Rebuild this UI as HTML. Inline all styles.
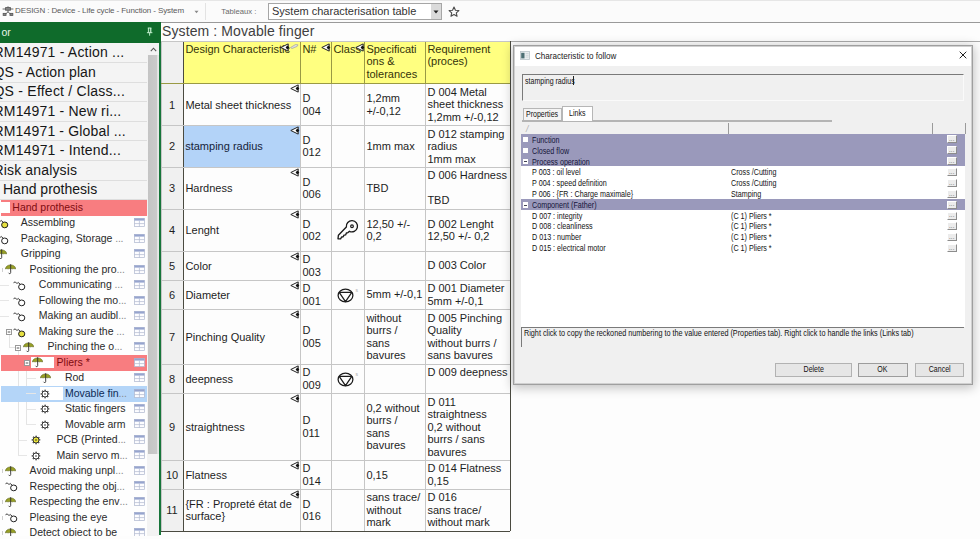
<!DOCTYPE html>
<html lang="en"><head><meta charset="utf-8"><title>System characterisation table</title>
<style>
html,body{margin:0;padding:0}
body{width:980px;height:539px;position:relative;overflow:hidden;background:#fdfdfd;font-family:"Liberation Sans","DejaVu Sans",sans-serif;color:#1c1c1c}
div,span,svg{position:absolute;box-sizing:border-box}
.t{white-space:nowrap;line-height:1}
/* toolbar */
#tb{left:0;top:0;width:980px;height:22px;background:#fbfbfb;border-top:1px solid #e6e6e6}
#tbline{left:161px;top:22px;width:819px;height:1px;background:#9a9a9a}
/* left panel */
#gh{left:0;top:22px;width:161px;height:21px;background:#0f6b2b}
#gl{left:158.5px;top:43px;width:2.5px;height:492px;background:#17753a}
#list{left:0;top:43px;width:147px;height:157px;background:#f4f4f4}
.li{left:0;width:147px;height:19.6px;border-bottom:1px solid #dedede;font-size:14px;color:#161616}
.li span{top:1.9px;white-space:nowrap;line-height:14px}
#sb{left:147px;top:43px;width:11.5px;height:496px;background:#f3f3f3}
#th{left:148px;top:55px;width:10.5px;height:398.5px;background:linear-gradient(90deg,#c4c4c4,#cbcbcb 80%,#e2e2e2 84%,#e8e8e8)}
#tree{left:0;top:199.5px;width:147px;height:340px;background:#fefefe}
.tr{left:0;width:147px;height:15.5px;font-size:10.5px;color:#2a2a2a}
.tr .t{top:1.75px}
/* table */
.c{overflow:hidden;font-size:11px;line-height:12.5px;color:#1e1e1e;display:flex;align-items:center;padding-left:2.4px;white-space:nowrap}
.c.h{align-items:flex-start;padding-top:1.5px;background:#ffff80;color:#33330a}
.c.n{background:#f0f0f0;justify-content:center;padding-left:0;padding-top:0.8px}
.c.a{padding-top:0.8px}
.c>i{position:static;font-style:normal;display:block}
.vl,.hl{background:#c6c6c6}
.dk{background:#4a4a40}
.dh{background:#9a9a44}
/* dialog */
#dlg{left:513px;top:45px;width:459.5px;height:339.5px;background:#f0f0f0;border:1px solid #9f9f9f;box-shadow:inset 0 0 0 1px #d0d0d0,0 2px 10px 1px rgba(0,0,0,.24)}
.d{font-size:8.8px;color:#111;white-space:nowrap;line-height:1;transform-origin:0 50%}
</style></head>
<body>
<div id="tb"></div><div id="tbline"></div>
<svg style="left:2px;top:6px" width="12" height="10" viewBox="0 0 12 10"><g fill="none" stroke="#5a5a5a" stroke-width="0.9"><path d="M0.6 3h10.8M6 0.3v6M2.6 9l3.4-3.2L9.4 9"/><rect x="3.6" y="1.6" width="4.8" height="2.6" fill="#888"/><rect x="1.2" y="7.4" width="2.8" height="2" fill="#888"/><rect x="8" y="7.4" width="2.8" height="2" fill="#888"/></g></svg>
<span class="t" style="left:15px;top:7px;font-size:8px;letter-spacing:-0.1px;color:#5a5a5a">DESIGN : Device - Life cycle - Function - System</span>
<svg style="left:193.5px;top:10px" width="5" height="4" viewBox="0 0 5 4"><path d="M0.5 0.8h4L2.5 3.2z" fill="#888"/></svg>
<div style="left:205px;top:3px;width:1px;height:17px;background:#e3e3e3"></div>
<span class="t" style="left:221.3px;top:8px;font-size:7.7px;color:#6a6a6a">Tableaux :</span>
<div style="left:267.5px;top:3px;width:174px;height:17px;background:#fff;border:1px solid #a6a6a6"></div>
<div style="left:430.5px;top:4px;width:10px;height:15px;background:#dadada"></div>
<svg style="left:432.6px;top:10px" width="6" height="4" viewBox="0 0 6 4"><path d="M0.5 0.5h5L3 3.5z" fill="#222"/></svg>
<span class="t" style="left:272px;top:6px;font-size:11px;color:#333">System characterisation table</span>
<svg style="left:448px;top:6px" width="12" height="12" viewBox="0 0 12 12"><path d="M6 1l1.45 3.2 3.45.35-2.6 2.3.75 3.4L6 8.5 2.95 10.25l.75-3.4-2.6-2.3 3.45-.35z" fill="none" stroke="#4a4a4a" stroke-width="1.1" stroke-linejoin="round"/></svg>
<div id="gh"></div>
<span class="t" style="left:1.5px;top:26.5px;font-size:10.5px;color:#e8f5ea">or</span>
<svg style="left:146px;top:26.5px" width="8" height="9" viewBox="0 0 8 9"><path d="M1.8 1h3.6M2.4 1v4.7M4.9 1v4.7M0.9 5.7h5.5M3.65 5.7v3" fill="none" stroke="#d2fbdc" stroke-width="0.9"/><path d="M4.3 1v4.7" stroke="#d2fbdc" stroke-width="0.7"/></svg>
<div id="list">
<div class="li" style="top:0.4px"><span style="left:-6.5px;letter-spacing:0.20px">RM14971 - Action ...</span></div>
<div class="li" style="top:20.0px"><span style="left:-6.5px;letter-spacing:0.07px">QS - Action plan</span></div>
<div class="li" style="top:39.6px"><span style="left:-6.5px;letter-spacing:0.23px">QS - Effect / Class...</span></div>
<div class="li" style="top:59.2px"><span style="left:-6.5px;letter-spacing:0.18px">RM14971 - New ri...</span></div>
<div class="li" style="top:78.8px"><span style="left:-6.5px;letter-spacing:0.16px">RM14971 - Global ...</span></div>
<div class="li" style="top:98.4px"><span style="left:-6.5px;letter-spacing:0.20px">RM14971 - Intend...</span></div>
<div class="li" style="top:118.0px"><span style="left:-6.5px;letter-spacing:0.15px">Risk analysis</span></div>
<div class="li" style="top:137.6px"><span style="left:3.0px;letter-spacing:0.00px">Hand prothesis</span></div>
</div>
<div id="sb"></div><div id="th"></div>
<svg style="left:149.5px;top:46.5px" width="7" height="5" viewBox="0 0 7 5"><path d="M0.8 4.2L3.5 1.2 6.2 4.2" fill="none" stroke="#555" stroke-width="1.1"/></svg>
<div id="gl"></div>
<div id="tree">
<div style="left:9px;top:135.5px;width:1px;height:12px;background:#e4e4e4"></div><div style="left:9px;top:147.5px;width:6px;height:1px;background:#e4e4e4"></div>
<div style="left:17.5px;top:151px;width:1px;height:105px;background:#e4e4e4"></div>
<div style="left:26px;top:167px;width:1px;height:58px;background:#e4e4e4"></div>
<div class="tr" style="top:0.45px;">
<div style="left:1.2px;top:0.2px;width:145.8px;height:15.7px;background:#f87d80;"></div>
<div style="left:0;top:2.5px;width:10px;height:10.5px;background:#fff"></div>
<span class="t" style="left:12.3px;color:#7e0c10;">Hand prothesis</span>
</div>
<div class="tr" style="top:15.94px;">
<svg style="left:-4.5px;top:3.7px" width="13" height="10" viewBox="0 0 13 10"><path d="M0.4 2.2c.9-1.5 1.8-1.3 2.6-.5s1.6.6 2.2-.2l2.6 2.2" fill="none" stroke="#2a2a2a" stroke-width="0.95"/><ellipse cx="8.7" cy="5.9" rx="3.1" ry="2.9" fill="#e6e040" stroke="#222" stroke-width="1"/></svg>
<span class="t" style="left:20.8px;">Assembling</span>
<svg style="left:133.7px;top:2.7px" width="11" height="9" viewBox="0 0 11 9"><rect x="0.4" y="0.4" width="10" height="8.2" fill="#fdfdff" stroke="#adb6ce" stroke-width="0.7"/><rect x="0.4" y="0.4" width="10" height="2.2" fill="#96a4ce"/><path d="M0.4 5.6h10M5.4 2.7v5.9" stroke="#b4bcd2" stroke-width="0.75"/></svg>
</div>
<div class="tr" style="top:31.43px;">
<svg style="left:-4.5px;top:3.7px" width="13" height="10" viewBox="0 0 13 10"><path d="M0.4 2.2c.9-1.5 1.8-1.3 2.6-.5s1.6.6 2.2-.2l2.6 2.2" fill="none" stroke="#2a2a2a" stroke-width="0.95"/><ellipse cx="8.7" cy="5.9" rx="3.1" ry="2.9" fill="#fff" stroke="#222" stroke-width="1"/></svg>
<span class="t" style="left:20.8px;">Packaging, Storage<span style="position:static;color:#8a8a8a;letter-spacing:-0.2px"> ...</span></span>
<svg style="left:133.7px;top:2.7px" width="11" height="9" viewBox="0 0 11 9"><rect x="0.4" y="0.4" width="10" height="8.2" fill="#fdfdff" stroke="#adb6ce" stroke-width="0.7"/><rect x="0.4" y="0.4" width="10" height="2.2" fill="#96a4ce"/><path d="M0.4 5.6h10M5.4 2.7v5.9" stroke="#b4bcd2" stroke-width="0.75"/></svg>
</div>
<div class="tr" style="top:46.92px;">
<svg style="left:-4.5px;top:2.4px" width="11.2" height="10.3" viewBox="0 0 12 11"><path d="M0.4 5.3C0.7 2.6 2.9 1 6 1s5.3 1.6 5.6 4.3q-.9-.9-1.9 0-.9-.9-1.9 0-.9-.9-1.8 0-.9-.9-1.9 0-.9-.9-1.9 0-.9-.9-1.8 0z" fill="#98a026" stroke="#4c5212" stroke-width="0.5"/><path d="M4.2 1.5C5 .9 7 .9 7.8 1.5L6 .2z" fill="#222"/><path d="M6.1 1v8.2c0 1.4-1.9 1.5-2.3 0.2" fill="none" stroke="#2c2c2c" stroke-width="0.95"/></svg>
<span class="t" style="left:20.8px;">Gripping</span>
<svg style="left:133.7px;top:2.7px" width="11" height="9" viewBox="0 0 11 9"><rect x="0.4" y="0.4" width="10" height="8.2" fill="#fdfdff" stroke="#adb6ce" stroke-width="0.7"/><rect x="0.4" y="0.4" width="10" height="2.2" fill="#96a4ce"/><path d="M0.4 5.6h10M5.4 2.7v5.9" stroke="#b4bcd2" stroke-width="0.75"/></svg>
</div>
<div class="tr" style="top:62.41px;">
<div style="left:1.5px;top:6px;width:1px;height:4px;background:#cfcfcf"></div>
<svg style="left:5.0px;top:2.4px" width="11.2" height="10.3" viewBox="0 0 12 11"><path d="M0.4 5.3C0.7 2.6 2.9 1 6 1s5.3 1.6 5.6 4.3q-.9-.9-1.9 0-.9-.9-1.9 0-.9-.9-1.8 0-.9-.9-1.9 0-.9-.9-1.9 0-.9-.9-1.8 0z" fill="#98a026" stroke="#4c5212" stroke-width="0.5"/><path d="M4.2 1.5C5 .9 7 .9 7.8 1.5L6 .2z" fill="#222"/><path d="M6.1 1v8.2c0 1.4-1.9 1.5-2.3 0.2" fill="none" stroke="#2c2c2c" stroke-width="0.95"/></svg>
<span class="t" style="left:29.6px;">Positioning the pro<span style="position:static;color:#8a8a8a;letter-spacing:-0.2px">...</span></span>
<svg style="left:133.7px;top:2.7px" width="11" height="9" viewBox="0 0 11 9"><rect x="0.4" y="0.4" width="10" height="8.2" fill="#fdfdff" stroke="#adb6ce" stroke-width="0.7"/><rect x="0.4" y="0.4" width="10" height="2.2" fill="#96a4ce"/><path d="M0.4 5.6h10M5.4 2.7v5.9" stroke="#b4bcd2" stroke-width="0.75"/></svg>
</div>
<div class="tr" style="top:77.90px;">
<div style="left:0;top:7.5px;width:9px;height:1px;background:#e6e6e6"></div>
<svg style="left:13.2px;top:3.7px" width="13" height="10" viewBox="0 0 13 10"><path d="M0.4 2.2c.9-1.5 1.8-1.3 2.6-.5s1.6.6 2.2-.2l2.6 2.2" fill="none" stroke="#2a2a2a" stroke-width="0.95"/><ellipse cx="8.7" cy="5.9" rx="3.1" ry="2.9" fill="#fff" stroke="#222" stroke-width="1"/></svg>
<span class="t" style="left:38.8px;">Communicating<span style="position:static;color:#8a8a8a;letter-spacing:-0.2px"> ...</span></span>
<svg style="left:133.7px;top:2.7px" width="11" height="9" viewBox="0 0 11 9"><rect x="0.4" y="0.4" width="10" height="8.2" fill="#fdfdff" stroke="#adb6ce" stroke-width="0.7"/><rect x="0.4" y="0.4" width="10" height="2.2" fill="#96a4ce"/><path d="M0.4 5.6h10M5.4 2.7v5.9" stroke="#b4bcd2" stroke-width="0.75"/></svg>
</div>
<div class="tr" style="top:93.39px;">
<div style="left:0;top:7.5px;width:9px;height:1px;background:#e6e6e6"></div>
<svg style="left:13.2px;top:3.7px" width="13" height="10" viewBox="0 0 13 10"><path d="M0.4 2.2c.9-1.5 1.8-1.3 2.6-.5s1.6.6 2.2-.2l2.6 2.2" fill="none" stroke="#2a2a2a" stroke-width="0.95"/><ellipse cx="8.7" cy="5.9" rx="3.1" ry="2.9" fill="#fff" stroke="#222" stroke-width="1"/></svg>
<span class="t" style="left:38.8px;">Following the mo<span style="position:static;color:#8a8a8a;letter-spacing:-0.2px">...</span></span>
<svg style="left:133.7px;top:2.7px" width="11" height="9" viewBox="0 0 11 9"><rect x="0.4" y="0.4" width="10" height="8.2" fill="#fdfdff" stroke="#adb6ce" stroke-width="0.7"/><rect x="0.4" y="0.4" width="10" height="2.2" fill="#96a4ce"/><path d="M0.4 5.6h10M5.4 2.7v5.9" stroke="#b4bcd2" stroke-width="0.75"/></svg>
</div>
<div class="tr" style="top:108.88px;">
<div style="left:0;top:7.5px;width:9px;height:1px;background:#e6e6e6"></div>
<svg style="left:13.2px;top:3.7px" width="13" height="10" viewBox="0 0 13 10"><path d="M0.4 2.2c.9-1.5 1.8-1.3 2.6-.5s1.6.6 2.2-.2l2.6 2.2" fill="none" stroke="#2a2a2a" stroke-width="0.95"/><ellipse cx="8.7" cy="5.9" rx="3.1" ry="2.9" fill="#fff" stroke="#222" stroke-width="1"/></svg>
<span class="t" style="left:38.8px;">Making an audibl<span style="position:static;color:#8a8a8a;letter-spacing:-0.2px">...</span></span>
<svg style="left:133.7px;top:2.7px" width="11" height="9" viewBox="0 0 11 9"><rect x="0.4" y="0.4" width="10" height="8.2" fill="#fdfdff" stroke="#adb6ce" stroke-width="0.7"/><rect x="0.4" y="0.4" width="10" height="2.2" fill="#96a4ce"/><path d="M0.4 5.6h10M5.4 2.7v5.9" stroke="#b4bcd2" stroke-width="0.75"/></svg>
</div>
<div class="tr" style="top:124.37px;">
<svg style="left:6.0px;top:5.2px" width="6" height="6" viewBox="0 0 6 6"><rect x="0.5" y="0.5" width="5" height="5" fill="#fff" stroke="#999" stroke-width="1"/><path d="M1.7 3h2.6" stroke="#444" stroke-width="0.9"/></svg>
<svg style="left:13.2px;top:3.7px" width="13" height="10" viewBox="0 0 13 10"><path d="M0.4 2.2c.9-1.5 1.8-1.3 2.6-.5s1.6.6 2.2-.2l2.6 2.2" fill="none" stroke="#2a2a2a" stroke-width="0.95"/><ellipse cx="8.7" cy="5.9" rx="3.1" ry="2.9" fill="#e6e040" stroke="#222" stroke-width="1"/></svg>
<span class="t" style="left:38.8px;">Making sure the<span style="position:static;color:#8a8a8a;letter-spacing:-0.2px"> ...</span></span>
<svg style="left:133.7px;top:2.7px" width="11" height="9" viewBox="0 0 11 9"><rect x="0.4" y="0.4" width="10" height="8.2" fill="#fdfdff" stroke="#adb6ce" stroke-width="0.7"/><rect x="0.4" y="0.4" width="10" height="2.2" fill="#96a4ce"/><path d="M0.4 5.6h10M5.4 2.7v5.9" stroke="#b4bcd2" stroke-width="0.75"/></svg>
</div>
<div class="tr" style="top:139.86px;">
<svg style="left:15.0px;top:5.2px" width="6" height="6" viewBox="0 0 6 6"><rect x="0.5" y="0.5" width="5" height="5" fill="#fff" stroke="#999" stroke-width="1"/><path d="M1.7 3h2.6" stroke="#444" stroke-width="0.9"/></svg>
<svg style="left:22.6px;top:2.4px" width="11.2" height="10.3" viewBox="0 0 12 11"><path d="M0.4 5.3C0.7 2.6 2.9 1 6 1s5.3 1.6 5.6 4.3q-.9-.9-1.9 0-.9-.9-1.9 0-.9-.9-1.8 0-.9-.9-1.9 0-.9-.9-1.9 0-.9-.9-1.8 0z" fill="#98a026" stroke="#4c5212" stroke-width="0.5"/><path d="M4.2 1.5C5 .9 7 .9 7.8 1.5L6 .2z" fill="#222"/><path d="M6.1 1v8.2c0 1.4-1.9 1.5-2.3 0.2" fill="none" stroke="#2c2c2c" stroke-width="0.95"/></svg>
<span class="t" style="left:47.6px;">Pinching the o<span style="position:static;color:#8a8a8a;letter-spacing:-0.2px">...</span></span>
<svg style="left:133.7px;top:2.7px" width="11" height="9" viewBox="0 0 11 9"><rect x="0.4" y="0.4" width="10" height="8.2" fill="#fdfdff" stroke="#adb6ce" stroke-width="0.7"/><rect x="0.4" y="0.4" width="10" height="2.2" fill="#96a4ce"/><path d="M0.4 5.6h10M5.4 2.7v5.9" stroke="#b4bcd2" stroke-width="0.75"/></svg>
</div>
<div class="tr" style="top:155.35px;">
<div style="left:1.2px;top:0.2px;width:145.8px;height:15.7px;background:#f87d80;"></div>
<div style="left:31px;top:2px;width:23px;height:11.5px;background:#fff"></div><svg style="left:23.5px;top:5.2px" width="6" height="6" viewBox="0 0 6 6"><rect x="0.5" y="0.5" width="5" height="5" fill="#fff" stroke="#999" stroke-width="1"/><path d="M1.7 3h2.6" stroke="#444" stroke-width="0.9"/></svg>
<svg style="left:31.5px;top:2.4px" width="11.2" height="10.3" viewBox="0 0 12 11"><path d="M0.4 5.3C0.7 2.6 2.9 1 6 1s5.3 1.6 5.6 4.3q-.9-.9-1.9 0-.9-.9-1.9 0-.9-.9-1.8 0-.9-.9-1.9 0-.9-.9-1.9 0-.9-.9-1.8 0z" fill="#98a026" stroke="#4c5212" stroke-width="0.5"/><path d="M4.2 1.5C5 .9 7 .9 7.8 1.5L6 .2z" fill="#222"/><path d="M6.1 1v8.2c0 1.4-1.9 1.5-2.3 0.2" fill="none" stroke="#2c2c2c" stroke-width="0.95"/></svg>
<span class="t" style="left:56.6px;color:#7e0c10;">Pliers *</span>
<svg style="left:133.7px;top:2.7px" width="11" height="9" viewBox="0 0 11 9"><rect x="0.4" y="0.4" width="10" height="8.2" fill="#fdfdff" stroke="#adb6ce" stroke-width="0.7"/><rect x="0.4" y="0.4" width="10" height="2.2" fill="#96a4ce"/><path d="M0.4 5.6h10M5.4 2.7v5.9" stroke="#b4bcd2" stroke-width="0.75"/></svg>
</div>
<div class="tr" style="top:170.84px;">
<div style="left:26px;top:7.5px;width:10px;height:1px;background:#e6e6e6"></div>
<svg style="left:40.2px;top:2.4px" width="11.2" height="10.3" viewBox="0 0 12 11"><path d="M0.4 5.3C0.7 2.6 2.9 1 6 1s5.3 1.6 5.6 4.3q-.9-.9-1.9 0-.9-.9-1.9 0-.9-.9-1.8 0-.9-.9-1.9 0-.9-.9-1.9 0-.9-.9-1.8 0z" fill="#98a026" stroke="#4c5212" stroke-width="0.5"/><path d="M4.2 1.5C5 .9 7 .9 7.8 1.5L6 .2z" fill="#222"/><path d="M6.1 1v8.2c0 1.4-1.9 1.5-2.3 0.2" fill="none" stroke="#2c2c2c" stroke-width="0.95"/></svg>
<span class="t" style="left:64.9px;">Rod</span>
<svg style="left:133.7px;top:2.7px" width="11" height="9" viewBox="0 0 11 9"><rect x="0.4" y="0.4" width="10" height="8.2" fill="#fdfdff" stroke="#adb6ce" stroke-width="0.7"/><rect x="0.4" y="0.4" width="10" height="2.2" fill="#96a4ce"/><path d="M0.4 5.6h10M5.4 2.7v5.9" stroke="#b4bcd2" stroke-width="0.75"/></svg>
</div>
<div class="tr" style="top:186.33px;">
<div style="left:1.2px;top:0.2px;width:145.8px;height:15.7px;background:#b4d5f8;"></div>
<div style="left:39.7px;top:1.5px;width:23px;height:12.5px;background:#fff"></div>
<div style="left:26px;top:7.5px;width:10px;height:1px;background:#e6e6e6"></div>
<svg style="left:39.6px;top:2.75px" width="10" height="10" viewBox="0 0 10 10"><circle cx="5" cy="5" r="3.8" fill="none" stroke="#2a2a2a" stroke-width="0.95" stroke-dasharray="1.5 1.484" transform="rotate(-15 5 5)"/><circle cx="5" cy="5" r="3" fill="#fff" stroke="#2a2a2a" stroke-width="0.95"/><circle cx="5" cy="5" r="0.8" fill="#2a2a2a" stroke="#fff" stroke-width="0"/></svg>
<span class="t" style="left:64.9px;color:#0c2a55;">Movable fin<span style="position:static;color:#8a8a8a;letter-spacing:-0.2px">...</span></span>
<svg style="left:133.7px;top:2.7px" width="11" height="9" viewBox="0 0 11 9"><rect x="0.4" y="0.4" width="10" height="8.2" fill="#fdfdff" stroke="#adb6ce" stroke-width="0.7"/><rect x="0.4" y="0.4" width="10" height="2.2" fill="#96a4ce"/><path d="M0.4 5.6h10M5.4 2.7v5.9" stroke="#b4bcd2" stroke-width="0.75"/></svg>
</div>
<div class="tr" style="top:201.82px;">
<div style="left:26px;top:7.5px;width:10px;height:1px;background:#e6e6e6"></div>
<svg style="left:39.6px;top:2.75px" width="10" height="10" viewBox="0 0 10 10"><circle cx="5" cy="5" r="3.8" fill="none" stroke="#2a2a2a" stroke-width="0.95" stroke-dasharray="1.5 1.484" transform="rotate(-15 5 5)"/><circle cx="5" cy="5" r="3" fill="#fff" stroke="#2a2a2a" stroke-width="0.95"/><circle cx="5" cy="5" r="0.8" fill="#2a2a2a" stroke="#fff" stroke-width="0"/></svg>
<span class="t" style="left:64.9px;">Static fingers</span>
<svg style="left:133.7px;top:2.7px" width="11" height="9" viewBox="0 0 11 9"><rect x="0.4" y="0.4" width="10" height="8.2" fill="#fdfdff" stroke="#adb6ce" stroke-width="0.7"/><rect x="0.4" y="0.4" width="10" height="2.2" fill="#96a4ce"/><path d="M0.4 5.6h10M5.4 2.7v5.9" stroke="#b4bcd2" stroke-width="0.75"/></svg>
</div>
<div class="tr" style="top:217.31px;">
<div style="left:26px;top:7.5px;width:10px;height:1px;background:#e6e6e6"></div>
<svg style="left:39.6px;top:2.75px" width="10" height="10" viewBox="0 0 10 10"><circle cx="5" cy="5" r="3.8" fill="none" stroke="#2a2a2a" stroke-width="0.95" stroke-dasharray="1.5 1.484" transform="rotate(-15 5 5)"/><circle cx="5" cy="5" r="3" fill="#fff" stroke="#2a2a2a" stroke-width="0.95"/><circle cx="5" cy="5" r="0.8" fill="#2a2a2a" stroke="#fff" stroke-width="0"/></svg>
<span class="t" style="left:64.9px;">Movable arm</span>
<svg style="left:133.7px;top:2.7px" width="11" height="9" viewBox="0 0 11 9"><rect x="0.4" y="0.4" width="10" height="8.2" fill="#fdfdff" stroke="#adb6ce" stroke-width="0.7"/><rect x="0.4" y="0.4" width="10" height="2.2" fill="#96a4ce"/><path d="M0.4 5.6h10M5.4 2.7v5.9" stroke="#b4bcd2" stroke-width="0.75"/></svg>
</div>
<div class="tr" style="top:232.80px;">
<div style="left:17.5px;top:7.5px;width:9px;height:1px;background:#e6e6e6"></div>
<svg style="left:31.2px;top:2.75px" width="10" height="10" viewBox="0 0 10 10"><circle cx="5" cy="5" r="3.8" fill="none" stroke="#2a2a2a" stroke-width="0.95" stroke-dasharray="1.5 1.484" transform="rotate(-15 5 5)"/><circle cx="5" cy="5" r="3" fill="#e8e23a" stroke="#2a2a2a" stroke-width="0.95"/><circle cx="5" cy="5" r="0.8" fill="#2a2a2a" stroke="#e8e23a" stroke-width="0"/></svg>
<span class="t" style="left:56.4px;">PCB (Printed<span style="position:static;color:#8a8a8a;letter-spacing:-0.2px">...</span></span>
<svg style="left:133.7px;top:2.7px" width="11" height="9" viewBox="0 0 11 9"><rect x="0.4" y="0.4" width="10" height="8.2" fill="#fdfdff" stroke="#adb6ce" stroke-width="0.7"/><rect x="0.4" y="0.4" width="10" height="2.2" fill="#96a4ce"/><path d="M0.4 5.6h10M5.4 2.7v5.9" stroke="#b4bcd2" stroke-width="0.75"/></svg>
</div>
<div class="tr" style="top:248.29px;">
<div style="left:17.5px;top:7.5px;width:9px;height:1px;background:#e6e6e6"></div>
<svg style="left:31.2px;top:2.75px" width="10" height="10" viewBox="0 0 10 10"><circle cx="5" cy="5" r="3.8" fill="none" stroke="#2a2a2a" stroke-width="0.95" stroke-dasharray="1.5 1.484" transform="rotate(-15 5 5)"/><circle cx="5" cy="5" r="3" fill="#fff" stroke="#2a2a2a" stroke-width="0.95"/><circle cx="5" cy="5" r="0.8" fill="#2a2a2a" stroke="#fff" stroke-width="0"/></svg>
<span class="t" style="left:56.4px;">Main servo m<span style="position:static;color:#8a8a8a;letter-spacing:-0.2px">...</span></span>
<svg style="left:133.7px;top:2.7px" width="11" height="9" viewBox="0 0 11 9"><rect x="0.4" y="0.4" width="10" height="8.2" fill="#fdfdff" stroke="#adb6ce" stroke-width="0.7"/><rect x="0.4" y="0.4" width="10" height="2.2" fill="#96a4ce"/><path d="M0.4 5.6h10M5.4 2.7v5.9" stroke="#b4bcd2" stroke-width="0.75"/></svg>
</div>
<div class="tr" style="top:263.78px;">
<div style="left:1.5px;top:6px;width:1px;height:4px;background:#cfcfcf"></div>
<svg style="left:5.0px;top:2.4px" width="11.2" height="10.3" viewBox="0 0 12 11"><path d="M0.4 5.3C0.7 2.6 2.9 1 6 1s5.3 1.6 5.6 4.3q-.9-.9-1.9 0-.9-.9-1.9 0-.9-.9-1.8 0-.9-.9-1.9 0-.9-.9-1.9 0-.9-.9-1.8 0z" fill="#98a026" stroke="#4c5212" stroke-width="0.5"/><path d="M4.2 1.5C5 .9 7 .9 7.8 1.5L6 .2z" fill="#222"/><path d="M6.1 1v8.2c0 1.4-1.9 1.5-2.3 0.2" fill="none" stroke="#2c2c2c" stroke-width="0.95"/></svg>
<span class="t" style="left:29.6px;">Avoid making unpl<span style="position:static;color:#8a8a8a;letter-spacing:-0.2px">...</span></span>
<svg style="left:133.7px;top:2.7px" width="11" height="9" viewBox="0 0 11 9"><rect x="0.4" y="0.4" width="10" height="8.2" fill="#fdfdff" stroke="#adb6ce" stroke-width="0.7"/><rect x="0.4" y="0.4" width="10" height="2.2" fill="#96a4ce"/><path d="M0.4 5.6h10M5.4 2.7v5.9" stroke="#b4bcd2" stroke-width="0.75"/></svg>
</div>
<div class="tr" style="top:279.27px;">
<svg style="left:5.0px;top:3.7px" width="13" height="10" viewBox="0 0 13 10"><path d="M0.4 2.2c.9-1.5 1.8-1.3 2.6-.5s1.6.6 2.2-.2l2.6 2.2" fill="none" stroke="#2a2a2a" stroke-width="0.95"/><ellipse cx="8.7" cy="5.9" rx="3.1" ry="2.9" fill="#fff" stroke="#222" stroke-width="1"/></svg>
<span class="t" style="left:29.6px;">Respecting the obj<span style="position:static;color:#8a8a8a;letter-spacing:-0.2px">...</span></span>
<svg style="left:133.7px;top:2.7px" width="11" height="9" viewBox="0 0 11 9"><rect x="0.4" y="0.4" width="10" height="8.2" fill="#fdfdff" stroke="#adb6ce" stroke-width="0.7"/><rect x="0.4" y="0.4" width="10" height="2.2" fill="#96a4ce"/><path d="M0.4 5.6h10M5.4 2.7v5.9" stroke="#b4bcd2" stroke-width="0.75"/></svg>
</div>
<div class="tr" style="top:294.76px;">
<div style="left:1.5px;top:6px;width:1px;height:4px;background:#cfcfcf"></div>
<svg style="left:5.0px;top:2.4px" width="11.2" height="10.3" viewBox="0 0 12 11"><path d="M0.4 5.3C0.7 2.6 2.9 1 6 1s5.3 1.6 5.6 4.3q-.9-.9-1.9 0-.9-.9-1.9 0-.9-.9-1.8 0-.9-.9-1.9 0-.9-.9-1.9 0-.9-.9-1.8 0z" fill="#98a026" stroke="#4c5212" stroke-width="0.5"/><path d="M4.2 1.5C5 .9 7 .9 7.8 1.5L6 .2z" fill="#222"/><path d="M6.1 1v8.2c0 1.4-1.9 1.5-2.3 0.2" fill="none" stroke="#2c2c2c" stroke-width="0.95"/></svg>
<span class="t" style="left:29.6px;">Respecting the env<span style="position:static;color:#8a8a8a;letter-spacing:-0.2px">...</span></span>
<svg style="left:133.7px;top:2.7px" width="11" height="9" viewBox="0 0 11 9"><rect x="0.4" y="0.4" width="10" height="8.2" fill="#fdfdff" stroke="#adb6ce" stroke-width="0.7"/><rect x="0.4" y="0.4" width="10" height="2.2" fill="#96a4ce"/><path d="M0.4 5.6h10M5.4 2.7v5.9" stroke="#b4bcd2" stroke-width="0.75"/></svg>
</div>
<div class="tr" style="top:310.25px;">
<div style="left:1.5px;top:6px;width:1px;height:4px;background:#cfcfcf"></div>
<svg style="left:5.0px;top:3.7px" width="13" height="10" viewBox="0 0 13 10"><path d="M0.4 2.2c.9-1.5 1.8-1.3 2.6-.5s1.6.6 2.2-.2l2.6 2.2" fill="none" stroke="#2a2a2a" stroke-width="0.95"/><ellipse cx="8.7" cy="5.9" rx="3.1" ry="2.9" fill="#fff" stroke="#222" stroke-width="1"/></svg>
<span class="t" style="left:29.6px;">Pleasing the eye</span>
<svg style="left:133.7px;top:2.7px" width="11" height="9" viewBox="0 0 11 9"><rect x="0.4" y="0.4" width="10" height="8.2" fill="#fdfdff" stroke="#adb6ce" stroke-width="0.7"/><rect x="0.4" y="0.4" width="10" height="2.2" fill="#96a4ce"/><path d="M0.4 5.6h10M5.4 2.7v5.9" stroke="#b4bcd2" stroke-width="0.75"/></svg>
</div>
<div class="tr" style="top:325.74px;">
<div style="left:1.5px;top:6px;width:1px;height:4px;background:#cfcfcf"></div>
<svg style="left:5.0px;top:2.4px" width="11.2" height="10.3" viewBox="0 0 12 11"><path d="M0.4 5.3C0.7 2.6 2.9 1 6 1s5.3 1.6 5.6 4.3q-.9-.9-1.9 0-.9-.9-1.9 0-.9-.9-1.8 0-.9-.9-1.9 0-.9-.9-1.9 0-.9-.9-1.8 0z" fill="#98a026" stroke="#4c5212" stroke-width="0.5"/><path d="M4.2 1.5C5 .9 7 .9 7.8 1.5L6 .2z" fill="#222"/><path d="M6.1 1v8.2c0 1.4-1.9 1.5-2.3 0.2" fill="none" stroke="#2c2c2c" stroke-width="0.95"/></svg>
<span class="t" style="left:29.6px;">Detect object to be</span>
<svg style="left:133.7px;top:2.7px" width="11" height="9" viewBox="0 0 11 9"><rect x="0.4" y="0.4" width="10" height="8.2" fill="#fdfdff" stroke="#adb6ce" stroke-width="0.7"/><rect x="0.4" y="0.4" width="10" height="2.2" fill="#96a4ce"/><path d="M0.4 5.6h10M5.4 2.7v5.9" stroke="#b4bcd2" stroke-width="0.75"/></svg>
</div>
</div>
<div style="left:0;top:536px;width:161px;height:3px;background:#fdfdfd"></div>
<span class="t" style="left:162px;top:23.5px;font-size:14px;letter-spacing:0.1px;color:#404040">System : Movable finger</span>
<div style="left:161px;top:40.9px;width:819px;height:1px;background:#ababab"></div>
<div class="c n" style="left:161.0px;top:41.0px;width:22.0px;height:42.5px"><i></i></div>
<div class="c h" style="left:183.0px;top:41.0px;width:117.0px;height:42.5px"><i>Design Characteristic</i></div>
<div class="c h" style="left:300.0px;top:41.0px;width:31.0px;height:42.5px"><i>N#</i></div>
<div class="c h" style="left:331.0px;top:41.0px;width:33.0px;height:42.5px"><i>Class</i></div>
<div class="c h" style="left:364.0px;top:41.0px;width:61.0px;height:42.5px"><i>Specificati<br>ons &amp;<br>tolerances</i></div>
<div class="c h" style="left:425.0px;top:41.0px;width:85.0px;height:42.5px"><i>Requirement<br>(proces)</i></div>
<div class="c n" style="left:161.0px;top:83.5px;width:22.0px;height:42.0px"><i>1</i></div>
<div class="c a" style="left:183.0px;top:83.5px;width:117.0px;height:42.0px"><i>Metal sheet thickness</i></div>
<div class="c " style="left:300.0px;top:83.5px;width:31.0px;height:42.0px"><i>D<br>004</i></div>
<div class="c " style="left:331.0px;top:83.5px;width:33.0px;height:42.0px"><i></i></div>
<div class="c " style="left:364.0px;top:83.5px;width:61.0px;height:42.0px"><i>1,2mm<br>+/-0,12</i></div>
<div class="c " style="left:425.0px;top:83.5px;width:85.0px;height:42.0px"><i>D 004 Metal<br>sheet thickness<br>1,2mm +/-0,12</i></div>
<div class="c n" style="left:161.0px;top:125.5px;width:22.0px;height:41.5px"><i>2</i></div>
<div class="c a" style="left:183.0px;top:125.5px;width:117.0px;height:41.5px"><i>stamping radius</i></div>
<div class="c " style="left:300.0px;top:125.5px;width:31.0px;height:41.5px"><i>D<br>012</i></div>
<div class="c " style="left:331.0px;top:125.5px;width:33.0px;height:41.5px"><i></i></div>
<div class="c " style="left:364.0px;top:125.5px;width:61.0px;height:41.5px"><i>1mm max</i></div>
<div class="c " style="left:425.0px;top:125.5px;width:85.0px;height:41.5px"><i>D 012 stamping<br>radius<br>1mm max</i></div>
<div style="left:184.0px;top:126.0px;width:116.0px;height:41.0px;background:#b3d3f8"></div>
<span class="t" style="left:185.2px;top:141.1px;font-size:11px;color:#16233a">stamping radius</span>
<div class="c n" style="left:161.0px;top:167.0px;width:22.0px;height:42.0px"><i>3</i></div>
<div class="c a" style="left:183.0px;top:167.0px;width:117.0px;height:42.0px"><i>Hardness</i></div>
<div class="c " style="left:300.0px;top:167.0px;width:31.0px;height:42.0px"><i>D<br>006</i></div>
<div class="c " style="left:331.0px;top:167.0px;width:33.0px;height:42.0px"><i></i></div>
<div class="c " style="left:364.0px;top:167.0px;width:61.0px;height:42.0px"><i>TBD</i></div>
<div class="c " style="left:425.0px;top:167.0px;width:85.0px;height:42.0px"><i>D 006 Hardness<br>&nbsp;<br>TBD</i></div>
<div class="c n" style="left:161.0px;top:209.0px;width:22.0px;height:42.0px"><i>4</i></div>
<div class="c a" style="left:183.0px;top:209.0px;width:117.0px;height:42.0px"><i>Lenght</i></div>
<div class="c " style="left:300.0px;top:209.0px;width:31.0px;height:42.0px"><i>D<br>002</i></div>
<div class="c " style="left:331.0px;top:209.0px;width:33.0px;height:42.0px"><i></i></div>
<div class="c " style="left:364.0px;top:209.0px;width:61.0px;height:42.0px"><i>12,50 +/-<br>0,2</i></div>
<div class="c " style="left:425.0px;top:209.0px;width:85.0px;height:42.0px"><i>D 002 Lenght<br>12,50 +/- 0,2</i></div>
<svg style="left:336.0px;top:218.5px" width="23" height="22" viewBox="0 0 23 22"><g fill="none" stroke="#1a1a1a" stroke-width="1.35" stroke-linejoin="round"><path d="M10.35 8A5.6 5.6 0 1 1 13.5 12.3L12 13.6l-1.6.4-.8 1.9-1.6.2-.8 1.7-1.6.2-1 1.9L2 19.8l.4-3.6z"/><circle cx="16" cy="7.2" r="1.35" stroke-width="1.2"/></g></svg>
<div class="c n" style="left:161.0px;top:251.0px;width:22.0px;height:29.0px"><i>5</i></div>
<div class="c a" style="left:183.0px;top:251.0px;width:117.0px;height:29.0px"><i>Color</i></div>
<div class="c " style="left:300.0px;top:251.0px;width:31.0px;height:29.0px"><i>D<br>003</i></div>
<div class="c " style="left:331.0px;top:251.0px;width:33.0px;height:29.0px"><i></i></div>
<div class="c " style="left:364.0px;top:251.0px;width:61.0px;height:29.0px"><i></i></div>
<div class="c " style="left:425.0px;top:251.0px;width:85.0px;height:29.0px"><i>D 003 Color</i></div>
<div class="c n" style="left:161.0px;top:280.0px;width:22.0px;height:29.0px"><i>6</i></div>
<div class="c a" style="left:183.0px;top:280.0px;width:117.0px;height:29.0px"><i>Diameter</i></div>
<div class="c " style="left:300.0px;top:280.0px;width:31.0px;height:29.0px"><i>D<br>001</i></div>
<div class="c " style="left:331.0px;top:280.0px;width:33.0px;height:29.0px"><i></i></div>
<div class="c " style="left:364.0px;top:280.0px;width:61.0px;height:29.0px"><i>5mm +/-0,1</i></div>
<div class="c " style="left:425.0px;top:280.0px;width:85.0px;height:29.0px"><i>D 001 Diameter<br>5mm +/-0,1</i></div>
<svg style="left:336.9px;top:288.0px" width="17" height="15" viewBox="0 0 17 15"><g fill="none" stroke="#1a1a1a" stroke-width="1.25"><ellipse cx="8.5" cy="7.5" rx="7.4" ry="6.3"/><path d="M2.2 4.3h12.6L8.5 13.6z" stroke-linejoin="round"/></g></svg>
<span class="t" style="left:355.5px;top:287.5px;font-size:5px;color:#aaa">s</span>
<div class="c n" style="left:161.0px;top:309.0px;width:22.0px;height:55.0px"><i>7</i></div>
<div class="c a" style="left:183.0px;top:309.0px;width:117.0px;height:55.0px"><i>Pinching Quality</i></div>
<div class="c " style="left:300.0px;top:309.0px;width:31.0px;height:55.0px"><i>D<br>005</i></div>
<div class="c " style="left:331.0px;top:309.0px;width:33.0px;height:55.0px"><i></i></div>
<div class="c " style="left:364.0px;top:309.0px;width:61.0px;height:55.0px"><i>without<br>burrs /<br>sans<br>bavures</i></div>
<div class="c " style="left:425.0px;top:309.0px;width:85.0px;height:55.0px"><i>D 005 Pinching<br>Quality<br>without burrs /<br>sans bavures</i></div>
<div class="c n" style="left:161.0px;top:364.0px;width:22.0px;height:29.0px"><i>8</i></div>
<div class="c a" style="left:183.0px;top:364.0px;width:117.0px;height:29.0px"><i>deepness</i></div>
<div class="c " style="left:300.0px;top:364.0px;width:31.0px;height:29.0px"><i>D<br>009</i></div>
<div class="c " style="left:331.0px;top:364.0px;width:33.0px;height:29.0px"><i></i></div>
<div class="c " style="left:364.0px;top:364.0px;width:61.0px;height:29.0px"><i></i></div>
<div class="c " style="left:425.0px;top:364.0px;width:85.0px;height:29.0px"><i>D 009 deepness<br>&nbsp;</i></div>
<svg style="left:336.9px;top:372.0px" width="17" height="15" viewBox="0 0 17 15"><g fill="none" stroke="#1a1a1a" stroke-width="1.25"><ellipse cx="8.5" cy="7.5" rx="7.4" ry="6.3"/><path d="M2.2 4.3h12.6L8.5 13.6z" stroke-linejoin="round"/></g></svg>
<span class="t" style="left:355.5px;top:371.5px;font-size:5px;color:#aaa">s</span>
<div class="c n" style="left:161.0px;top:393.0px;width:22.0px;height:67.5px"><i>9</i></div>
<div class="c a" style="left:183.0px;top:393.0px;width:117.0px;height:67.5px"><i>straightness</i></div>
<div class="c " style="left:300.0px;top:393.0px;width:31.0px;height:67.5px"><i>D<br>011</i></div>
<div class="c " style="left:331.0px;top:393.0px;width:33.0px;height:67.5px"><i></i></div>
<div class="c " style="left:364.0px;top:393.0px;width:61.0px;height:67.5px"><i>0,2 without<br>burrs /<br>sans<br>bavures</i></div>
<div class="c " style="left:425.0px;top:393.0px;width:85.0px;height:67.5px"><i>D 011<br>straightness<br>0,2 without<br>burrs / sans<br>bavures</i></div>
<div class="c n" style="left:161.0px;top:460.5px;width:22.0px;height:28.5px"><i>10</i></div>
<div class="c a" style="left:183.0px;top:460.5px;width:117.0px;height:28.5px"><i>Flatness</i></div>
<div class="c " style="left:300.0px;top:460.5px;width:31.0px;height:28.5px"><i>D<br>014</i></div>
<div class="c " style="left:331.0px;top:460.5px;width:33.0px;height:28.5px"><i></i></div>
<div class="c " style="left:364.0px;top:460.5px;width:61.0px;height:28.5px"><i>0,15</i></div>
<div class="c " style="left:425.0px;top:460.5px;width:85.0px;height:28.5px"><i>D 014 Flatness<br>0,15</i></div>
<div class="c n" style="left:161.0px;top:489.0px;width:22.0px;height:42.0px"><i>11</i></div>
<div class="c a" style="left:183.0px;top:489.0px;width:117.0px;height:42.0px"><i>{FR : Propreté état de<br>surface}</i></div>
<div class="c " style="left:300.0px;top:489.0px;width:31.0px;height:42.0px"><i>D<br>016</i></div>
<div class="c " style="left:331.0px;top:489.0px;width:33.0px;height:42.0px"><i></i></div>
<div class="c " style="left:364.0px;top:489.0px;width:61.0px;height:42.0px"><i>sans trace/<br>without<br>mark</i></div>
<div class="c " style="left:425.0px;top:489.0px;width:85.0px;height:42.0px"><i>D 016<br>sans trace/<br>without mark</i></div>
<div class="vl" style="left:160.5px;top:83.5px;width:1px;height:447.5px"></div>
<div class="vl " style="left:160.5px;top:41.0px;width:1px;height:42.5px"></div>
<div class="vl dk" style="left:182.5px;top:83.5px;width:1px;height:447.5px"></div>
<div class="vl dk" style="left:182.5px;top:41.0px;width:1px;height:42.5px"></div>
<div class="vl" style="left:299.5px;top:83.5px;width:1px;height:447.5px"></div>
<div class="vl dh" style="left:299.5px;top:41.0px;width:1px;height:42.5px"></div>
<div class="vl" style="left:330.5px;top:83.5px;width:1px;height:447.5px"></div>
<div class="vl dh" style="left:330.5px;top:41.0px;width:1px;height:42.5px"></div>
<div class="vl" style="left:363.5px;top:83.5px;width:1px;height:447.5px"></div>
<div class="vl dh" style="left:363.5px;top:41.0px;width:1px;height:42.5px"></div>
<div class="vl" style="left:424.5px;top:83.5px;width:1px;height:447.5px"></div>
<div class="vl dh" style="left:424.5px;top:41.0px;width:1px;height:42.5px"></div>
<div class="vl dk" style="left:509.5px;top:83.5px;width:1px;height:447.5px"></div>
<div class="vl dk" style="left:509.5px;top:41.0px;width:1px;height:42.5px"></div>
<div class="hl" style="left:161.0px;top:40.5px;width:349.0px;height:1px"></div>
<div class="hl dh" style="left:161.0px;top:83.0px;width:349.0px;height:1px"></div>
<div class="hl" style="left:161.0px;top:125.0px;width:349.0px;height:1px"></div>
<div class="hl" style="left:161.0px;top:166.5px;width:349.0px;height:1px"></div>
<div class="hl" style="left:161.0px;top:208.5px;width:349.0px;height:1px"></div>
<div class="hl" style="left:161.0px;top:250.5px;width:349.0px;height:1px"></div>
<div class="hl" style="left:161.0px;top:279.5px;width:349.0px;height:1px"></div>
<div class="hl" style="left:161.0px;top:308.5px;width:349.0px;height:1px"></div>
<div class="hl" style="left:161.0px;top:363.5px;width:349.0px;height:1px"></div>
<div class="hl" style="left:161.0px;top:392.5px;width:349.0px;height:1px"></div>
<div class="hl" style="left:161.0px;top:460.0px;width:349.0px;height:1px"></div>
<div class="hl" style="left:161.0px;top:488.5px;width:349.0px;height:1px"></div>
<div class="hl dk" style="left:161.0px;top:530.5px;width:349.0px;height:1px"></div>
<svg style="left:279.5px;top:43.0px" width="10" height="9" viewBox="0 0 10 9"><path d="M0.8 4.5L8.2 0.9v7.2z" fill="#fff" stroke="#222" stroke-width="1"/><path d="M7.3 2.6L9.4 4.5 7.3 6.4 5.6 4.5z" fill="#111"/></svg>
<svg style="left:320.5px;top:43.0px" width="10" height="9" viewBox="0 0 10 9"><path d="M0.8 4.5L8.2 0.9v7.2z" fill="#fff" stroke="#222" stroke-width="1"/><path d="M7.3 2.6L9.4 4.5 7.3 6.4 5.6 4.5z" fill="#111"/></svg>
<svg style="left:354.5px;top:43.0px" width="10" height="9" viewBox="0 0 10 9"><path d="M0.8 4.5L8.2 0.9v7.2z" fill="#fff" stroke="#222" stroke-width="1"/><path d="M7.3 2.6L9.4 4.5 7.3 6.4 5.6 4.5z" fill="#111"/></svg>
<svg style="left:290px;top:43px" width="9" height="6" viewBox="0 0 9 6"><path d="M0.5 4.5L5.5 1.5l2.5 0.3-0.8 1.6-5.2 2.2z" fill="#ddd" stroke="#999" stroke-width="0.6"/></svg>
<svg style="left:289.5px;top:84.4px" width="10" height="9" viewBox="0 0 10 9"><path d="M0.8 4.5L8.2 0.9v7.2z" fill="#fff" stroke="#222" stroke-width="1"/><path d="M7.3 2.6L9.4 4.5 7.3 6.4 5.6 4.5z" fill="#111"/></svg>
<svg style="left:289.5px;top:126.4px" width="10" height="9" viewBox="0 0 10 9"><path d="M0.8 4.5L8.2 0.9v7.2z" fill="#fff" stroke="#222" stroke-width="1"/><path d="M7.3 2.6L9.4 4.5 7.3 6.4 5.6 4.5z" fill="#111"/></svg>
<svg style="left:289.5px;top:167.9px" width="10" height="9" viewBox="0 0 10 9"><path d="M0.8 4.5L8.2 0.9v7.2z" fill="#fff" stroke="#222" stroke-width="1"/><path d="M7.3 2.6L9.4 4.5 7.3 6.4 5.6 4.5z" fill="#111"/></svg>
<svg style="left:289.5px;top:209.9px" width="10" height="9" viewBox="0 0 10 9"><path d="M0.8 4.5L8.2 0.9v7.2z" fill="#fff" stroke="#222" stroke-width="1"/><path d="M7.3 2.6L9.4 4.5 7.3 6.4 5.6 4.5z" fill="#111"/></svg>
<svg style="left:289.5px;top:251.9px" width="10" height="9" viewBox="0 0 10 9"><path d="M0.8 4.5L8.2 0.9v7.2z" fill="#fff" stroke="#222" stroke-width="1"/><path d="M7.3 2.6L9.4 4.5 7.3 6.4 5.6 4.5z" fill="#111"/></svg>
<svg style="left:289.5px;top:280.9px" width="10" height="9" viewBox="0 0 10 9"><path d="M0.8 4.5L8.2 0.9v7.2z" fill="#fff" stroke="#222" stroke-width="1"/><path d="M7.3 2.6L9.4 4.5 7.3 6.4 5.6 4.5z" fill="#111"/></svg>
<svg style="left:289.5px;top:309.9px" width="10" height="9" viewBox="0 0 10 9"><path d="M0.8 4.5L8.2 0.9v7.2z" fill="#fff" stroke="#222" stroke-width="1"/><path d="M7.3 2.6L9.4 4.5 7.3 6.4 5.6 4.5z" fill="#111"/></svg>
<svg style="left:289.5px;top:364.9px" width="10" height="9" viewBox="0 0 10 9"><path d="M0.8 4.5L8.2 0.9v7.2z" fill="#fff" stroke="#222" stroke-width="1"/><path d="M7.3 2.6L9.4 4.5 7.3 6.4 5.6 4.5z" fill="#111"/></svg>
<svg style="left:289.5px;top:393.9px" width="10" height="9" viewBox="0 0 10 9"><path d="M0.8 4.5L8.2 0.9v7.2z" fill="#fff" stroke="#222" stroke-width="1"/><path d="M7.3 2.6L9.4 4.5 7.3 6.4 5.6 4.5z" fill="#111"/></svg>
<svg style="left:289.5px;top:461.4px" width="10" height="9" viewBox="0 0 10 9"><path d="M0.8 4.5L8.2 0.9v7.2z" fill="#fff" stroke="#222" stroke-width="1"/><path d="M7.3 2.6L9.4 4.5 7.3 6.4 5.6 4.5z" fill="#111"/></svg>
<svg style="left:289.5px;top:489.9px" width="10" height="9" viewBox="0 0 10 9"><path d="M0.8 4.5L8.2 0.9v7.2z" fill="#fff" stroke="#222" stroke-width="1"/><path d="M7.3 2.6L9.4 4.5 7.3 6.4 5.6 4.5z" fill="#111"/></svg>
<div id="dlg">
<div style="left:1px;top:1px;width:455.5px;height:18.8px;background:#fff"></div>
<svg style="left:6.0px;top:4.5px" width="10" height="9" viewBox="0 0 10 9"><rect x="0.5" y="0.5" width="9" height="8" fill="#e9eef0" stroke="#b9c2c8" stroke-width="0.8"/><rect x="1.2" y="1.8" width="3.3" height="5.6" fill="#4c6f74"/><path d="M5.6 2.5h3M5.6 4.3h3M5.6 6.1h3" stroke="#c6ced2" stroke-width="0.7"/></svg>
<span class="d" style="left:20.5px;top:5.5px;font-size:8.8px;color:#1a1a1a;transform:scaleX(0.92)">Characteristic to follow</span>
<svg style="left:444.6px;top:5.3px" width="8" height="8" viewBox="0 0 8 8"><path d="M0.7 0.7l6.6 6.6M7.3 0.7L0.7 7.3" stroke="#222" stroke-width="1"/></svg>
<div style="left:8.0px;top:28.0px;width:442px;height:26.5px;border-top:1px solid #7a7a7a;border-left:1px solid #7a7a7a;border-bottom:1px solid #fafafa;border-right:1px solid #fafafa;background:#f0f0f0"></div>
<span class="d" style="left:10.5px;top:30.5px;transform:scaleX(0.8)">stamping radius</span>
<div style="left:59.2px;top:30.0px;width:1px;height:9px;background:#222"></div>
<div style="left:8.0px;top:74.0px;width:310px;height:1.5px;background:#b4b4b4"></div>
<div style="left:8.7px;top:61.5px;width:39.5px;height:12.5px;background:#f4f4f4;border:1px solid #b6b6b6;border-bottom:none"></div>
<div style="left:47.5px;top:60.0px;width:31px;height:14.5px;background:#fff;border:1px solid #b6b6b6;border-bottom:none"></div>
<span class="d" style="left:12.0px;top:64.0px;transform:scaleX(0.8)">Properties</span>
<span class="d" style="left:54.5px;top:62.8px;transform:scaleX(0.8)">Links</span>
<span class="d" style="left:12.0px;top:78.5px;color:#b0b0b0;font-style:italic">/</span>
<div style="left:214.0px;top:77.0px;width:1px;height:10.5px;background:#9a9a9a"></div>
<div style="left:418.0px;top:77.0px;width:1px;height:10.5px;background:#9a9a9a"></div>
<div style="left:450.5px;top:77.0px;width:1px;height:10.5px;background:#9a9a9a"></div>
<div style="left:7.0px;top:87.7px;width:443.5px;height:193.5px;background:#fff"></div>
<div style="left:7.0px;top:87.80px;width:443.5px;height:10.90px;background:#9a99bb"></div>
<div style="left:9.0px;top:90.70px;width:5px;height:5.5px;background:#fff"></div>
<span class="d" style="left:18.0px;top:89.90px;transform:scaleX(0.815);color:#15153a">Function</span>
<div style="left:433.0px;top:89.20px;width:10px;height:8px;background:#ececec;border:1px solid #fff;border-right-color:#8c8c8c;border-bottom-color:#8c8c8c"></div>
<span class="d" style="left:435.0px;top:90.00px;font-size:6px;letter-spacing:0.2px;color:#222">...</span>
<div style="left:7.0px;top:98.70px;width:443.5px;height:10.90px;background:#9a99bb"></div>
<div style="left:9.0px;top:101.60px;width:5px;height:5.5px;background:#fff"></div>
<span class="d" style="left:18.0px;top:100.80px;transform:scaleX(0.815);color:#15153a">Closed flow</span>
<div style="left:433.0px;top:100.10px;width:10px;height:8px;background:#ececec;border:1px solid #fff;border-right-color:#8c8c8c;border-bottom-color:#8c8c8c"></div>
<span class="d" style="left:435.0px;top:100.90px;font-size:6px;letter-spacing:0.2px;color:#222">...</span>
<div style="left:7.0px;top:109.60px;width:443.5px;height:10.90px;background:#9a99bb"></div>
<div style="left:9.0px;top:112.50px;width:5px;height:5.5px;background:#fff"></div>
<div style="left:10.2px;top:115.00px;width:3px;height:1px;background:#445"></div>
<span class="d" style="left:18.0px;top:111.70px;transform:scaleX(0.815);color:#15153a">Process operation</span>
<div style="left:433.0px;top:111.00px;width:10px;height:8px;background:#ececec;border:1px solid #fff;border-right-color:#8c8c8c;border-bottom-color:#8c8c8c"></div>
<span class="d" style="left:435.0px;top:111.80px;font-size:6px;letter-spacing:0.2px;color:#222">...</span>
<span class="d" style="left:18.0px;top:121.90px;transform:scaleX(0.815);">P 003 : oil level</span>
<span class="d" style="left:217.0px;top:121.90px;transform:scaleX(0.815)">Cross /Cutting</span>
<div style="left:433.0px;top:121.90px;width:10px;height:8px;background:#ececec;border:1px solid #fff;border-right-color:#8c8c8c;border-bottom-color:#8c8c8c"></div>
<span class="d" style="left:435.0px;top:122.70px;font-size:6px;letter-spacing:0.2px;color:#222">...</span>
<span class="d" style="left:18.0px;top:132.80px;transform:scaleX(0.815);">P 004 : speed definition</span>
<span class="d" style="left:217.0px;top:132.80px;transform:scaleX(0.815)">Cross /Cutting</span>
<div style="left:433.0px;top:132.80px;width:10px;height:8px;background:#ececec;border:1px solid #fff;border-right-color:#8c8c8c;border-bottom-color:#8c8c8c"></div>
<span class="d" style="left:435.0px;top:133.60px;font-size:6px;letter-spacing:0.2px;color:#222">...</span>
<span class="d" style="left:18.0px;top:143.70px;transform:scaleX(0.815);">P 006 : {FR : Charge maximale}</span>
<span class="d" style="left:217.0px;top:143.70px;transform:scaleX(0.815)">Stamping</span>
<div style="left:433.0px;top:143.70px;width:10px;height:8px;background:#ececec;border:1px solid #fff;border-right-color:#8c8c8c;border-bottom-color:#8c8c8c"></div>
<span class="d" style="left:435.0px;top:144.50px;font-size:6px;letter-spacing:0.2px;color:#222">...</span>
<div style="left:7.0px;top:153.20px;width:443.5px;height:10.90px;background:#9a99bb"></div>
<div style="left:9.0px;top:156.10px;width:5px;height:5.5px;background:#fff"></div>
<div style="left:10.2px;top:158.60px;width:3px;height:1px;background:#445"></div>
<span class="d" style="left:18.0px;top:155.30px;transform:scaleX(0.815);color:#15153a">Component (Father)</span>
<div style="left:433.0px;top:154.60px;width:10px;height:8px;background:#ececec;border:1px solid #fff;border-right-color:#8c8c8c;border-bottom-color:#8c8c8c"></div>
<span class="d" style="left:435.0px;top:155.40px;font-size:6px;letter-spacing:0.2px;color:#222">...</span>
<span class="d" style="left:18.0px;top:165.50px;transform:scaleX(0.815);">D 007 : integrity</span>
<span class="d" style="left:217.0px;top:165.50px;transform:scaleX(0.815)">(C 1) Pliers *</span>
<div style="left:433.0px;top:165.50px;width:10px;height:8px;background:#ececec;border:1px solid #fff;border-right-color:#8c8c8c;border-bottom-color:#8c8c8c"></div>
<span class="d" style="left:435.0px;top:166.30px;font-size:6px;letter-spacing:0.2px;color:#222">...</span>
<span class="d" style="left:18.0px;top:176.40px;transform:scaleX(0.815);">D 008 : cleanliness</span>
<span class="d" style="left:217.0px;top:176.40px;transform:scaleX(0.815)">(C 1) Pliers *</span>
<div style="left:433.0px;top:176.40px;width:10px;height:8px;background:#ececec;border:1px solid #fff;border-right-color:#8c8c8c;border-bottom-color:#8c8c8c"></div>
<span class="d" style="left:435.0px;top:177.20px;font-size:6px;letter-spacing:0.2px;color:#222">...</span>
<span class="d" style="left:18.0px;top:187.30px;transform:scaleX(0.815);">D 013 : number</span>
<span class="d" style="left:217.0px;top:187.30px;transform:scaleX(0.815)">(C 1) Pliers *</span>
<div style="left:433.0px;top:187.30px;width:10px;height:8px;background:#ececec;border:1px solid #fff;border-right-color:#8c8c8c;border-bottom-color:#8c8c8c"></div>
<span class="d" style="left:435.0px;top:188.10px;font-size:6px;letter-spacing:0.2px;color:#222">...</span>
<span class="d" style="left:18.0px;top:198.20px;transform:scaleX(0.815);">D 015 : electrical motor</span>
<span class="d" style="left:217.0px;top:198.20px;transform:scaleX(0.815)">(C 1) Pliers *</span>
<div style="left:433.0px;top:198.20px;width:10px;height:8px;background:#ececec;border:1px solid #fff;border-right-color:#8c8c8c;border-bottom-color:#8c8c8c"></div>
<span class="d" style="left:435.0px;top:199.00px;font-size:6px;letter-spacing:0.2px;color:#222">...</span>
<div style="left:7.0px;top:281.0px;width:443px;height:19.5px;border-top:1px solid #7a7a7a;border-left:1px solid #7a7a7a;background:#f0f0f0"></div>
<span class="d" style="left:9.7px;top:282.7px;transform:scaleX(0.823)">Right click to copy the reckoned numbering to the value entered (Properties tab). Right click to handle the links (Links tab)</span>
<div style="left:261.0px;top:316.5px;width:76.8px;height:14px;background:#e6e6e6;border:1px solid #b2b2b2;display:flex;align-items:center;justify-content:center"><span class="d" style="position:static;transform:scaleX(0.8);transform-origin:50% 50%">Delete</span></div>
<div style="left:344.0px;top:316.5px;width:49.5px;height:14px;background:#e6e6e6;border:1px solid #9c9c9c;display:flex;align-items:center;justify-content:center"><span class="d" style="position:static;transform:scaleX(0.8);transform-origin:50% 50%">OK</span></div>
<div style="left:400.5px;top:316.5px;width:49.8px;height:14px;background:#e6e6e6;border:1px solid #b2b2b2;display:flex;align-items:center;justify-content:center"><span class="d" style="position:static;transform:scaleX(0.8);transform-origin:50% 50%">Cancel</span></div>
</div>
</body></html>
